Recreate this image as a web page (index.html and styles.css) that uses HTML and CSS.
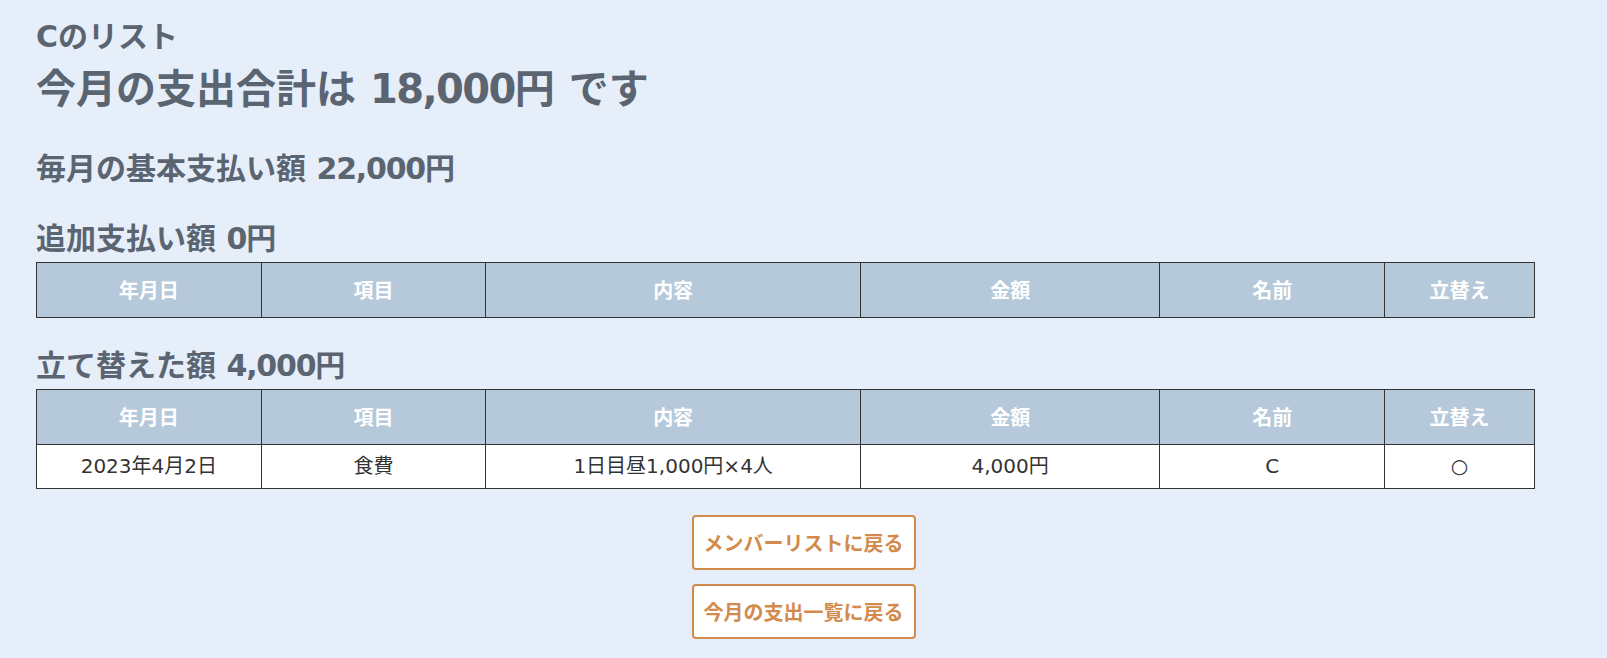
FILE: index.html
```html
<!DOCTYPE html>
<html lang="ja">
<head>
<meta charset="utf-8">
<title>Cのリスト</title>
<link rel="stylesheet" href="styles.css">
</head>
<body>
<main class="page">
  <h2 class="list-title">Cのリスト</h2>
  <h1 class="total">今月の支出合計は <span class="num">18,000</span>円 です</h1>
  <h2 class="sub-heading base">毎月の基本支払い額 <span class="num">22,000</span>円</h2>

  <h2 class="sub-heading section-title first">追加支払い額 <span class="num">0</span>円</h2>
  <table class="pay-table">
    <colgroup>
      <col class="c15"><col class="c15"><col class="c25"><col class="c20"><col class="c15"><col class="c10">
    </colgroup>
    <thead>
      <tr><th>年月日</th><th>項目</th><th>内容</th><th>金額</th><th>名前</th><th>立替え</th></tr>
    </thead>
    <tbody></tbody>
  </table>

  <h2 class="sub-heading section-title second">立て替えた額 <span class="num">4,000</span>円</h2>
  <table class="pay-table">
    <colgroup>
      <col class="c15"><col class="c15"><col class="c25"><col class="c20"><col class="c15"><col class="c10">
    </colgroup>
    <thead>
      <tr><th>年月日</th><th>項目</th><th>内容</th><th>金額</th><th>名前</th><th>立替え</th></tr>
    </thead>
    <tbody>
      <tr><td>2023年4月2日</td><td>食費</td><td>1日目昼1,000円×4人</td><td>4,000円</td><td>C</td><td>○</td></tr>
    </tbody>
  </table>

  <div class="actions">
    <a class="btn" href="#">メンバーリストに戻る</a>
    <a class="btn" href="#">今月の支出一覧に戻る</a>
  </div>
</main>
</body>
</html>
```
FILE: styles.css
```css
* { box-sizing: border-box; }
html, body {
  margin: 0;
  padding: 0;
  background: #e6eef9;
}
body {
  font-family: "Noto Sans CJK JP", "Noto Sans", sans-serif;
  color: #5b6471;
  font-size: 20px;
}
.page {
  padding: 14px 36px 20px;
}
h1, h2 {
  margin: 0;
  font-weight: 700;
  font-family: "DejaVu Sans", "Noto Sans CJK JP", sans-serif;
}
.num { letter-spacing: -0.04em; }
.list-title {
  font-size: 30px;
  line-height: 45px;
}
.total {
  font-size: 40px;
  line-height: 60px;
  margin-bottom: 27px;
}
.sub-heading {
  font-size: 30px;
  line-height: 45px;
}
.section-title { margin-bottom: 1px; }
.section-title.first { margin-top: 25px; }
.section-title.second { margin-top: 25px; }

.pay-table {
  width: 1499px;
  border-collapse: collapse;
  table-layout: fixed;
  background: #ffffff;
}
.c15 { width: 15%; }
.c25 { width: 25%; }
.c20 { width: 20%; }
.c10 { width: 10%; }
.pay-table th, .pay-table td {
  border: 1px solid #333333;
  text-align: center;
  font-size: 20px;
  line-height: 30px;
}
.pay-table th {
  background: #b6c9da;
  color: #ffffff;
  font-weight: 700;
  padding: 12px 4px;
}
.pay-table td {
  font-family: "DejaVu Sans", "Noto Sans CJK JP", sans-serif;
  color: #333333;
  font-weight: 400;
  padding: 6px 4px 7px;
}
.actions {
  display: flex;
  flex-direction: column;
  align-items: center;
  gap: 14px;
  margin-top: 26px;
}
.btn {
  display: block;
  width: 224px;
  padding: 10px 0;
  line-height: 31px;
  text-align: center;
  font-size: 20px;
  font-weight: 700;
  color: #d38b4d;
  background: #ffffff;
  border: 2px solid #d38b4d;
  border-radius: 4px;
  text-decoration: none;
}
```
